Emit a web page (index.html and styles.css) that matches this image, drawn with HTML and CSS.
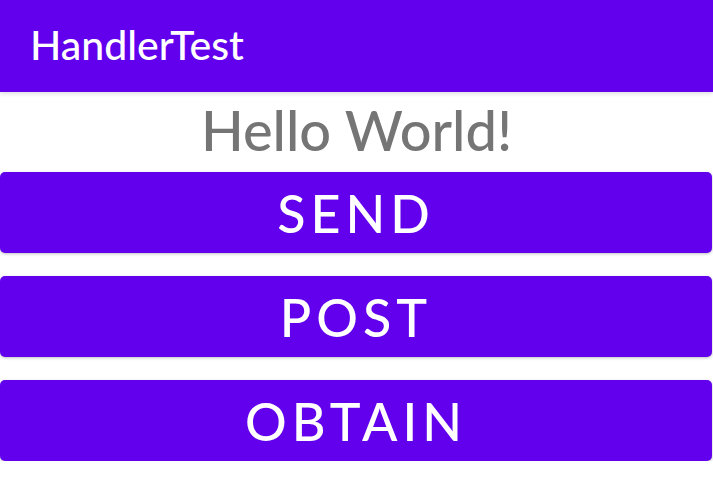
FILE: index.html
```html
<!DOCTYPE html>
<html>
<head>
<meta charset="utf-8">
<link rel="stylesheet" href="styles.css">
</head>
<body>
<div class="appbar"><span class="title">HandlerTest</span></div>
<div class="hello">Hello World!</div>
<div class="buttons">
  <div class="btn">SEND</div>
  <div class="btn">POST</div>
  <div class="btn">OBTAIN</div>
</div>
</body>
</html>
```
FILE: styles.css
```css
html, body {
  margin: 0;
  padding: 0;
  background: #ffffff;
  font-family: "Lato", "Noto Sans", sans-serif;
}
.appbar {
  height: 92px;
  background: #6200ee;
  display: flex;
  align-items: center;
  padding-left: 30px;
  padding-bottom: 4px;
  box-sizing: border-box;
  box-shadow: 0 2px 4px rgba(0,0,0,0.12);
  position: relative;
  z-index: 1;
}
.title {
  color: #ffffff;
  font-size: 41px;
  font-weight: 500;
}
.hello {
  height: 80px;
  display: flex;
  align-items: center;
  justify-content: center;
  padding-bottom: 6px;
  box-sizing: border-box;
  color: #757575;
  font-size: 56px;
  font-weight: 500;
}
.buttons {
  display: flex;
  flex-direction: column;
  gap: 23px;
}
.btn {
  height: 81px;
  background: #6200ee;
  border-radius: 5px;
  color: #ffffff;
  font-size: 52px;
  font-weight: 500;
  letter-spacing: 5px;
  display: flex;
  align-items: center;
  justify-content: center;
  box-shadow: 0 1px 3px rgba(0,0,0,0.25);
  margin-right: 1px;
}
```
